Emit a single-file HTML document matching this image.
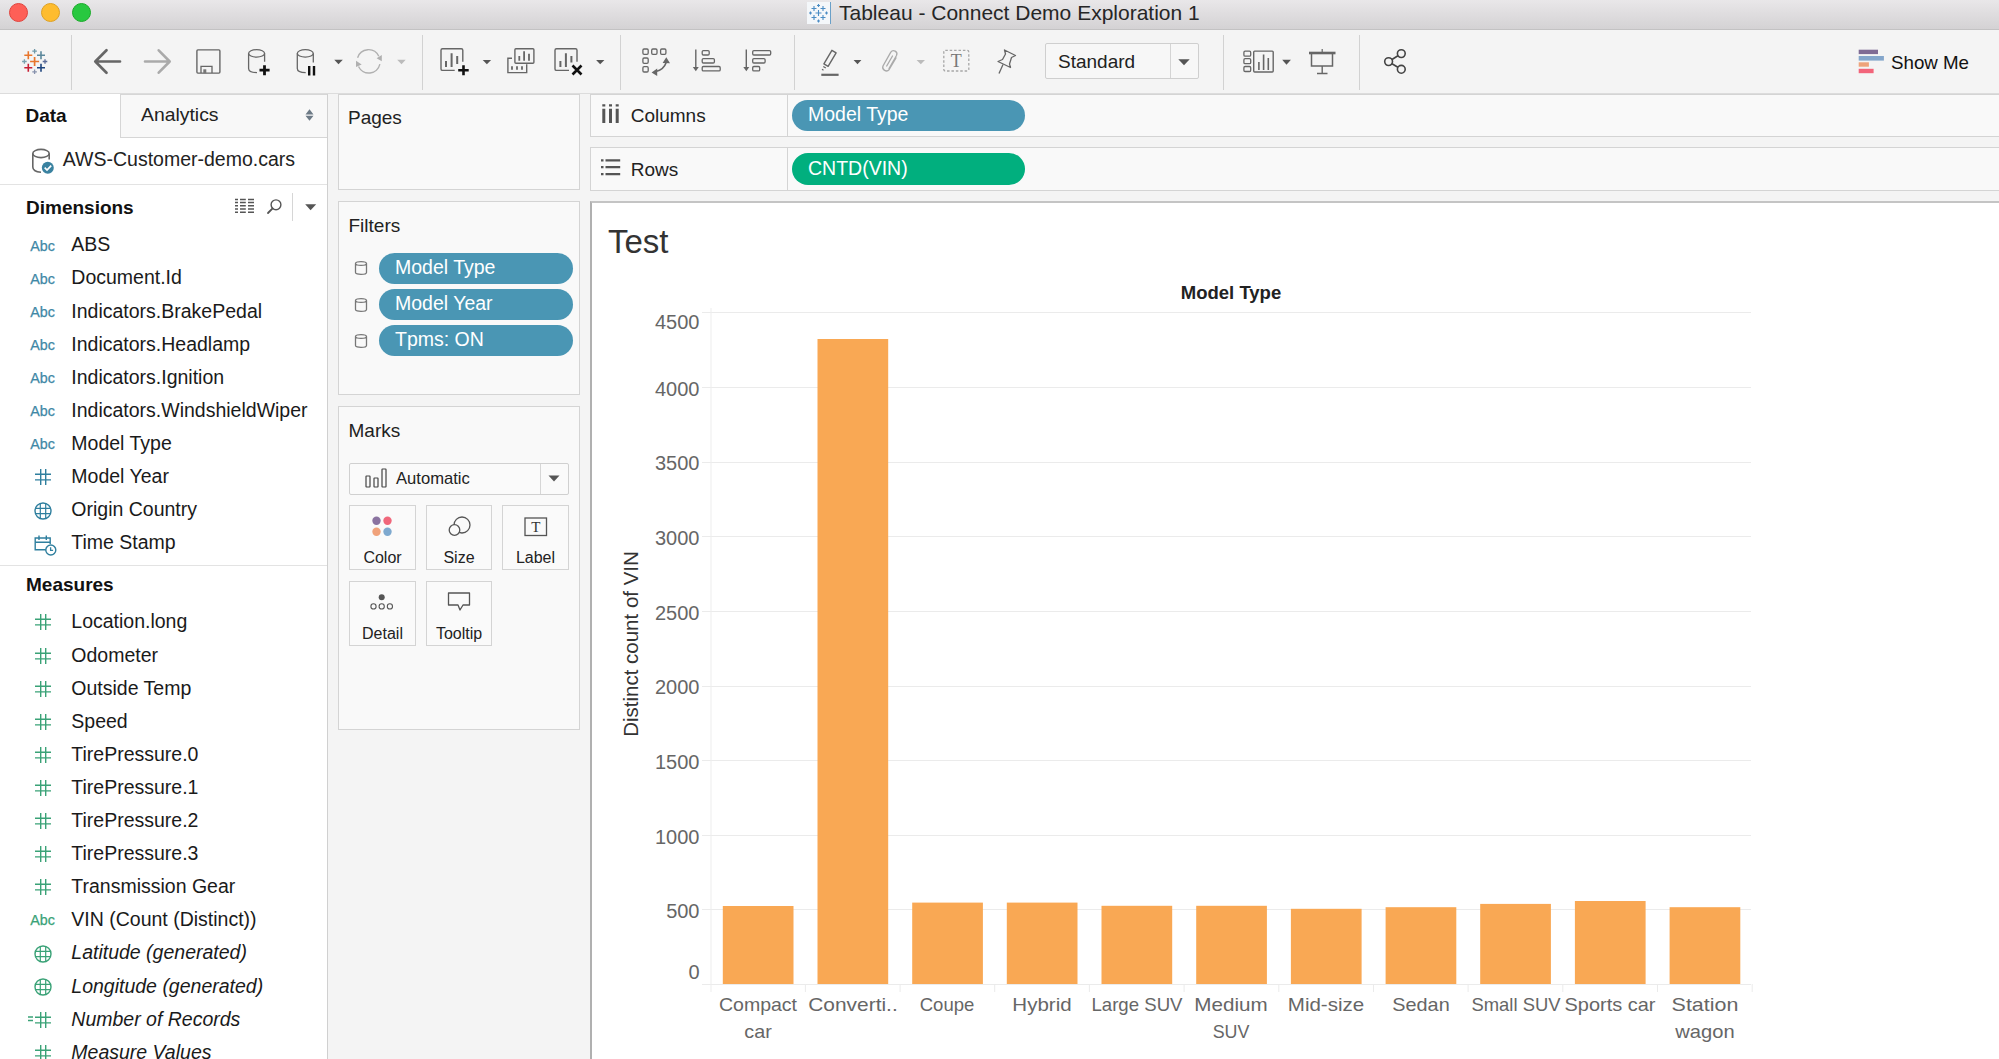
<!DOCTYPE html>
<html><head><meta charset="utf-8"><style>
html,body{margin:0;padding:0;width:1999px;height:1059px;overflow:hidden;background:#fff;font-family:"Liberation Sans", sans-serif;}
.r{position:absolute;}
.t{position:absolute;white-space:nowrap;line-height:1;}
.pill{border-radius:16px;}
</style></head><body>
<div class="r" style="left:0px;top:0px;width:1999px;height:29px;background:linear-gradient(#e9e7e9,#d4d2d4);"></div><div class="r" style="left:0px;top:29px;width:1999px;height:1px;background:#c3c2c3;"></div><div class="r" style="left:9.2px;top:2.7px;width:19px;height:19px;border-radius:50%;background:#fe5f57;box-sizing:border-box;border:0.5px solid #e0443e;"></div><div class="r" style="left:40.9px;top:2.7px;width:19px;height:19px;border-radius:50%;background:#febc2e;box-sizing:border-box;border:0.5px solid #dea123;"></div><div class="r" style="left:72.3px;top:2.7px;width:19px;height:19px;border-radius:50%;background:#28c840;box-sizing:border-box;border:0.5px solid #1aab29;"></div><div class="r" style="left:807px;top:2px;width:24px;height:22px;background:#f4f7fa;border-right:1px solid #6aa0c8;box-sizing:border-box;"></div><svg class="r" style="left:807px;top:2px;" width="24" height="22" viewBox="0 0 24 22"><path d="M10.0 3.5h3.0M11.5 2.0v3.0" stroke="#4a8cc4" stroke-width="1.1"/><path d="M4.5 6.5h5.0M7 4.0v5.0" stroke="#4a8cc4" stroke-width="1.1"/><path d="M13.5 6.5h5.0M16 4.0v5.0" stroke="#4a8cc4" stroke-width="1.1"/><path d="M2.0 11h3.0M3.5 9.5v3.0" stroke="#4a8cc4" stroke-width="1.1"/><path d="M8.5 11h6M11.5 8v6" stroke="#4a8cc4" stroke-width="1.1"/><path d="M18.0 11h3.0M19.5 9.5v3.0" stroke="#4a8cc4" stroke-width="1.1"/><path d="M4.5 15.5h5.0M7 13.0v5.0" stroke="#4a8cc4" stroke-width="1.1"/><path d="M13.5 15.5h5.0M16 13.0v5.0" stroke="#4a8cc4" stroke-width="1.1"/><path d="M10.0 19h3.0M11.5 17.5v3.0" stroke="#4a8cc4" stroke-width="1.1"/></svg><div class="t" style="left:839.0px;top:2.1px;font-size:21px;color:#262626;">Tableau - Connect Demo Exploration 1</div><div class="r" style="left:0px;top:30px;width:1999px;height:63px;background:#f4f4f4;"></div><div class="r" style="left:0px;top:93px;width:1999px;height:1px;background:#dcdcdc;"></div><div class="r" style="left:71px;top:35px;width:1px;height:55px;background:#d2d2d2;"></div><div class="r" style="left:422px;top:35px;width:1px;height:55px;background:#d2d2d2;"></div><div class="r" style="left:620px;top:35px;width:1px;height:55px;background:#d2d2d2;"></div><div class="r" style="left:794px;top:35px;width:1px;height:55px;background:#d2d2d2;"></div><div class="r" style="left:1223px;top:35px;width:1px;height:55px;background:#d2d2d2;"></div><div class="r" style="left:1359px;top:35px;width:1px;height:55px;background:#d2d2d2;"></div><svg class="r" style="left:0px;top:0px;pointer-events:none;" width="1999" height="100" viewBox="0 0 1999 100"><path d="M32.300000000000004 51.2h4.6M34.6 48.900000000000006v4.6" stroke="#6f98a8" stroke-width="1.3"/><path d="M24.3 55.2h8.0M28.3 51.2v8.0" stroke="#e8762c" stroke-width="1.6"/><path d="M37.0 55.2h8.0M41.0 51.2v8.0" stroke="#5b879b" stroke-width="1.6"/><path d="M30.1 61.5h9.0M34.6 57.0v9.0" stroke="#e8762c" stroke-width="1.7"/><path d="M22.099999999999998 61.5h4.6M24.4 59.2v4.6" stroke="#7aa2af" stroke-width="1.3"/><path d="M42.7 61.5h4.6M45.0 59.2v4.6" stroke="#5a6b99" stroke-width="1.3"/><path d="M24.3 67.8h8.0M28.3 63.8v8.0" stroke="#c72035" stroke-width="1.6"/><path d="M37.0 67.8h8.0M41.0 63.8v8.0" stroke="#1f457e" stroke-width="1.6"/><path d="M32.300000000000004 71.8h4.6M34.6 69.5v4.6" stroke="#8792ad" stroke-width="1.3"/><path d="M120 61.5H96M106.5 50.3L95.3 61.5L106.5 72.7" stroke="#666" stroke-width="2.7" fill="none" stroke-linecap="round" stroke-linejoin="round"/><path d="M145 61.5H169.5M158.7 50.3L169.7 61.5L158.7 72.7" stroke="#aaa" stroke-width="2.6" fill="none" stroke-linecap="round" stroke-linejoin="round"/><rect x="196.9" y="49.9" width="23" height="23.2" rx="1" stroke="#666" stroke-width="1.4" fill="none"/><path d="M201 73V66.3H212V73" stroke="#666" stroke-width="1.3" fill="none"/><rect x="203.3" y="69.3" width="3" height="4" fill="#777"/><ellipse cx="256.6" cy="53.4" rx="8" ry="3.7" stroke="#666" stroke-width="1.3" fill="none"/><path d="M248.6 53.4V68.5C248.6 71 252 72.6 257 72.6M264.6 53.4V61.8" stroke="#666" stroke-width="1.3" fill="none"/><path d="M259.5 70.2H269.6M264.5 65.2V75.3" stroke="#111" stroke-width="2.8"/><ellipse cx="305.3" cy="53.4" rx="8" ry="3.7" stroke="#666" stroke-width="1.3" fill="none"/><path d="M297.3 53.4V68.5C297.3 71 300.7 72.6 305.7 72.6M313.3 53.4V62.5" stroke="#666" stroke-width="1.3" fill="none"/><path d="M309.2 66V75.5M314 66V75.5" stroke="#111" stroke-width="2.4"/><path d="M334.3 59.8h8.5L338.5 64.3Z" fill="#555"/><path d="M397.2 59.8h8.5L401.5 64.3Z" fill="#bbb"/><path d="M357.6 57.7A11.4 11.4 0 0 1 378.8 56.2M379.9 64.2A11.4 11.4 0 0 1 358.5 66.5" stroke="#b0b0b0" stroke-width="1.4" fill="none"/><path d="M381.8 55L381.8 61.3L376.6 58.2Z M356 60.8L356 67L361.7 64.5Z" fill="#b0b0b0"/><path d="M462.8 61.7V50.3Q462.8 48.8 461.3 48.8H442.5Q441 48.8 441 50.3V68.9Q441 70.4 442.5 70.4H454.7" stroke="#666" stroke-width="1.4" fill="none"/><path d="M446 67V61M451.6 67V53.2M457.2 64V56" stroke="#666" stroke-width="2"/><path d="M458.2 70.2H468.7M463.5 65.2V75.3" stroke="#111" stroke-width="2.6"/><path d="M482.7 60h8.4L486.9 64.3Z" fill="#555"/><rect x="514.9" y="48.7" width="19" height="14.5" rx="1" stroke="#666" stroke-width="1.4" fill="#f4f4f4"/><path d="M519.3 60.8V56M524.1 60.8V51.2M529 60.8V53.8" stroke="#666" stroke-width="1.8"/><path d="M512 58.3H507.9V72.6H526.7V64.2" stroke="#666" stroke-width="1.4" fill="none"/><path d="M512 66.3V69.8M517 66.3V69.8M522 66.3V69.8" stroke="#666" stroke-width="1.8"/><path d="M577 61.7V50.3Q577 48.8 575.5 48.8H556.5Q555 48.8 555 50.3V68.9Q555 70.4 556.5 70.4H569" stroke="#666" stroke-width="1.4" fill="none"/><path d="M560.4 67V61M565.9 67V53.2M571.4 62.6V56" stroke="#666" stroke-width="2"/><path d="M572.5 65.5L581.5 74.5M581.5 65.5L572.5 74.5" stroke="#111" stroke-width="2.6"/><path d="M596.1 60h8.3L600.2 64.3Z" fill="#555"/><rect x="642.9" y="49" width="5.3" height="5.3" rx="1.2" stroke="#666" stroke-width="1.3" fill="none"/><rect x="651.7" y="49" width="5.3" height="5.3" rx="1.2" stroke="#666" stroke-width="1.3" fill="none"/><rect x="660.6" y="49" width="5.3" height="5.3" rx="1.2" stroke="#666" stroke-width="1.3" fill="none"/><rect x="642.9" y="58" width="5.3" height="5.3" rx="1.2" stroke="#666" stroke-width="1.3" fill="none"/><rect x="642.9" y="66.7" width="5.3" height="5.3" rx="1.2" stroke="#666" stroke-width="1.3" fill="none"/><path d="M656 71.6Q663.8 69.5 666.2 62.5" stroke="#666" stroke-width="1.6" fill="none"/><path d="M666.3 57.3L670 63.2L662.6 63Z M651.6 72.4L657.2 68.5L657.2 76Z" fill="#666"/><path d="M695.8 49.6V68" stroke="#666" stroke-width="1.4"/><path d="M692.8 67h6L695.8 71.3Z" fill="#666"/><rect x="702.2" y="50.6" width="7" height="4.4" rx="1.2" stroke="#666" stroke-width="1.3" fill="none"/><rect x="702.2" y="58.6" width="12.2" height="4.4" rx="1.2" stroke="#666" stroke-width="1.3" fill="none"/><rect x="702.2" y="66.5" width="18" height="4.4" rx="1.2" stroke="#666" stroke-width="1.3" fill="none"/><path d="M746.3 49.6V68" stroke="#666" stroke-width="1.4"/><path d="M743.3 67h6L746.3 71.3Z" fill="#666"/><rect x="752.7" y="50.6" width="18" height="4.4" rx="1.2" stroke="#666" stroke-width="1.3" fill="none"/><rect x="752.7" y="58.6" width="12.4" height="4.4" rx="1.2" stroke="#666" stroke-width="1.3" fill="none"/><rect x="752.7" y="66.5" width="7" height="4.4" rx="1.2" stroke="#666" stroke-width="1.3" fill="none"/><path d="M821.3 74.8H838.6" stroke="#666" stroke-width="2.2"/><path d="M831.9 50.3L836.1 52.8L828.1 66.3L823.9 63.8Z" stroke="#666" stroke-width="1.4" fill="none" stroke-linejoin="round"/><path d="M823.3 66.5L825.8 68M822 69.3L823.5 70.2" stroke="#666" stroke-width="1.3"/><path d="M853.6 60h7.8L857.5 64.3Z" fill="#555"/><path d="M889 68.5L896.5 55.5A3.3 3.3 0 0 0 890.8 52.2L883 66A3.6 3.6 0 0 0 889.2 69.5L896 57.8M892.5 56L886.7 66" stroke="#aaa" stroke-width="1.3" fill="none" stroke-linecap="round"/><path d="M916.6 60h8.4L920.8 64.3Z" fill="#bbb"/><rect x="943.8" y="50.4" width="25" height="20.6" rx="1.5" stroke="#a6a6a6" stroke-width="1.3" stroke-dasharray="2.5 1.9" fill="none"/><text x="956.3" y="67.3" font-family="Liberation Serif" font-size="18" text-anchor="middle" fill="#777">T</text><path d="M1004.5 50L1015.5 55.5L1011.5 57.5L1009.5 64L1010.5 67.5L998 61.5L1002.5 59.5L1005.5 54Z" stroke="#666" stroke-width="1.3" fill="none" stroke-linejoin="round"/><path d="M1003 64.5L999 73.5" stroke="#666" stroke-width="1.3"/><rect x="1243.9" y="51.2" width="6.8" height="5" rx="1.2" stroke="#666" stroke-width="1.3" fill="none"/><rect x="1243.9" y="58.7" width="6.8" height="5" rx="1.2" stroke="#666" stroke-width="1.3" fill="none"/><rect x="1243.9" y="66.5" width="6.8" height="5" rx="1.2" stroke="#666" stroke-width="1.3" fill="none"/><rect x="1253.7" y="51.1" width="19.5" height="20.9" rx="1" stroke="#666" stroke-width="1.4" fill="none"/><path d="M1258.9 70V62M1263.6 70V54.5M1268.3 70V58" stroke="#666" stroke-width="1.6"/><path d="M1282.2 59.7h8.7L1286.5 64.7Z" fill="#555"/><path d="M1309 53h26.5" stroke="#666" stroke-width="2.6"/><path d="M1322.2 49v3" stroke="#666" stroke-width="1.2"/><path d="M1311.5 54V66H1332.5V54" stroke="#666" stroke-width="1.5" fill="none"/><path d="M1322.2 66V73.5M1317 73.5H1327.5" stroke="#666" stroke-width="1.4"/><circle cx="1401.3" cy="53.6" r="3.9" stroke="#444" stroke-width="1.6" fill="none"/><circle cx="1388.6" cy="61.6" r="3.9" stroke="#444" stroke-width="1.6" fill="none"/><circle cx="1401.3" cy="69.3" r="3.9" stroke="#444" stroke-width="1.6" fill="none"/><path d="M1392 59.5L1397.9 55.8M1392 63.8L1397.9 67.2" stroke="#444" stroke-width="1.6"/><rect x="1858.7" y="49.7" width="19.3" height="4.4" fill="#7f6b94"/><rect x="1858.7" y="56" width="25.2" height="4.6" fill="#84a6cb"/><rect x="1858.7" y="62.3" width="10.2" height="4.4" fill="#eea37a"/><rect x="1858.7" y="68.8" width="14.9" height="4.4" fill="#f2647a"/></svg><div class="r" style="left:1044.7px;top:43px;width:154px;height:35.5px;background:#f7f7f7;border:1px solid #cfcfcf;border-radius:2px;box-sizing:border-box;"></div><div class="r" style="left:1169.5px;top:44px;width:1px;height:33.5px;background:#d4d4d4;"></div><svg class="r" style="left:1177.8px;top:58.5px;" width="12" height="7" viewBox="0 0 12 7"><path d="M0.3 0.3h11.4L6 6.3Z" fill="#555"/></svg><div class="t" style="left:1058.0px;top:51.5px;font-size:19px;color:#222;">Standard</div><div class="t" style="left:1891.3px;top:53.1px;font-size:19px;color:#111;transform: scaleX(0.985);transform-origin:left center;">Show Me</div><div class="r" style="left:0px;top:94px;width:327px;height:965px;background:#ffffff;"></div><div class="r" style="left:327px;top:94px;width:1px;height:965px;background:#d0d0d0;"></div><div class="r" style="left:328px;top:94px;width:1671px;height:965px;background:#f4f4f4;"></div><div class="r" style="left:120px;top:94px;width:207px;height:44px;background:#f8f8f8;border-left:1px solid #d6d6d6;border-bottom:1px solid #d6d6d6;border-top:1px solid #d6d6d6;box-sizing:border-box;"></div><div class="t" style="left:25.5px;top:105.9px;font-size:19px;color:#111;font-weight:700;">Data</div><div class="t" style="left:141.0px;top:105.4px;font-size:19px;color:#222;transform: scaleX(1.02);transform-origin:left center;">Analytics</div><svg class="r" style="left:305px;top:108.5px;" width="10" height="13" viewBox="0 0 10 13"><path d="M0.5 5.5L4.5 0.3L8.5 5.5Z M0.5 6.8L4.5 11.8L8.5 6.8Z" fill="#6d7a86"/></svg><div class="t" style="left:62.8px;top:150.3px;font-size:19.5px;color:#222;">AWS-Customer-demo.cars</div><div class="r" style="left:0px;top:184px;width:327px;height:1px;background:#e3e3e3;"></div><div class="t" style="left:26.0px;top:198.2px;font-size:19px;color:#111;font-weight:700;">Dimensions</div><div class="t" style="left:26.0px;top:575.0px;font-size:19px;color:#111;font-weight:700;">Measures</div><div class="r" style="left:0px;top:565px;width:327px;height:1px;background:#e3e3e3;"></div><div class="t" style="left:71.3px;top:235.3px;font-size:19.5px;color:#1a1a1a;">ABS</div><div class="t" style="left:71.3px;top:268.4px;font-size:19.5px;color:#1a1a1a;">Document.Id</div><div class="t" style="left:71.3px;top:301.5px;font-size:19.5px;color:#1a1a1a;">Indicators.BrakePedal</div><div class="t" style="left:71.3px;top:334.6px;font-size:19.5px;color:#1a1a1a;">Indicators.Headlamp</div><div class="t" style="left:71.3px;top:367.7px;font-size:19.5px;color:#1a1a1a;">Indicators.Ignition</div><div class="t" style="left:71.3px;top:400.8px;font-size:19.5px;color:#1a1a1a;">Indicators.WindshieldWiper</div><div class="t" style="left:71.3px;top:433.9px;font-size:19.5px;color:#1a1a1a;">Model Type</div><div class="t" style="left:71.3px;top:467.0px;font-size:19.5px;color:#1a1a1a;">Model Year</div><div class="t" style="left:71.3px;top:500.1px;font-size:19.5px;color:#1a1a1a;">Origin Country</div><div class="t" style="left:71.3px;top:533.2px;font-size:19.5px;color:#1a1a1a;">Time Stamp</div><div class="t" style="left:71.3px;top:612.4px;font-size:19.5px;color:#1a1a1a;">Location.long</div><div class="t" style="left:71.3px;top:645.5px;font-size:19.5px;color:#1a1a1a;">Odometer</div><div class="t" style="left:71.3px;top:678.6px;font-size:19.5px;color:#1a1a1a;">Outside Temp</div><div class="t" style="left:71.3px;top:711.7px;font-size:19.5px;color:#1a1a1a;">Speed</div><div class="t" style="left:71.3px;top:744.8px;font-size:19.5px;color:#1a1a1a;">TirePressure.0</div><div class="t" style="left:71.3px;top:777.9px;font-size:19.5px;color:#1a1a1a;">TirePressure.1</div><div class="t" style="left:71.3px;top:811.0px;font-size:19.5px;color:#1a1a1a;">TirePressure.2</div><div class="t" style="left:71.3px;top:844.1px;font-size:19.5px;color:#1a1a1a;">TirePressure.3</div><div class="t" style="left:71.3px;top:877.2px;font-size:19.5px;color:#1a1a1a;">Transmission Gear</div><div class="t" style="left:71.3px;top:910.3px;font-size:19.5px;color:#1a1a1a;">VIN (Count (Distinct))</div><div class="t" style="left:71.3px;top:943.4px;font-size:19.5px;color:#1a1a1a;font-style:italic;">Latitude (generated)</div><div class="t" style="left:71.3px;top:976.5px;font-size:19.5px;color:#1a1a1a;font-style:italic;">Longitude (generated)</div><div class="t" style="left:71.3px;top:1009.6px;font-size:19.5px;color:#1a1a1a;font-style:italic;">Number of Records</div><div class="t" style="left:71.3px;top:1042.7px;font-size:19.5px;color:#1a1a1a;font-style:italic;">Measure Values</div><div class="r" style="left:338px;top:94px;width:242px;height:96px;background:#f9f9f9;border:1px solid #d4d4d4;box-sizing:border-box;"></div><div class="r" style="left:338px;top:201px;width:242px;height:194px;background:#f9f9f9;border:1px solid #d4d4d4;box-sizing:border-box;"></div><div class="r" style="left:338px;top:406px;width:242px;height:324px;background:#f9f9f9;border:1px solid #d4d4d4;box-sizing:border-box;"></div><div class="t" style="left:348.0px;top:108.2px;font-size:19px;color:#222;">Pages</div><div class="t" style="left:348.5px;top:215.9px;font-size:19px;color:#222;">Filters</div><div class="t" style="left:348.5px;top:420.9px;font-size:19px;color:#222;">Marks</div><div class="r" style="left:590px;top:94px;width:1409px;height:43px;background:#f9f9f9;border:1px solid #d4d4d4;border-right:none;box-sizing:border-box;"></div><div class="r" style="left:590px;top:147px;width:1409px;height:44px;background:#f9f9f9;border:1px solid #d4d4d4;border-right:none;box-sizing:border-box;"></div><div class="r" style="left:787px;top:94px;width:1px;height:43px;background:#d4d4d4;"></div><div class="r" style="left:787px;top:147px;width:1px;height:44px;background:#d4d4d4;"></div><div class="t" style="left:630.7px;top:106.3px;font-size:19px;color:#222;">Columns</div><div class="t" style="left:630.7px;top:160.3px;font-size:19px;color:#222;">Rows</div><div class="r pill" style="left:792px;top:99.5px;width:233px;height:31px;background:#4a96b4;"></div><div class="r pill" style="left:792px;top:153.3px;width:233px;height:31.3px;background:#01af7e;"></div><div class="t" style="left:808.0px;top:105.1px;font-size:19.5px;color:#fff;">Model Type</div><div class="t" style="left:808.0px;top:158.5px;font-size:19.5px;color:#fff;">CNTD(VIN)</div><div class="r" style="left:590px;top:201px;width:1409px;height:858px;background:#ffffff;border-left:2px solid #b0b0b0;border-top:2px solid #c4c4c4;box-sizing:border-box;"></div><div class="t" style="left:30.2px;top:238.7px;font-size:14.3px;color:#3f88a6;-webkit-text-stroke:0.25px #3f88a6;">Abc</div><div class="t" style="left:30.2px;top:271.8px;font-size:14.3px;color:#3f88a6;-webkit-text-stroke:0.25px #3f88a6;">Abc</div><div class="t" style="left:30.2px;top:304.9px;font-size:14.3px;color:#3f88a6;-webkit-text-stroke:0.25px #3f88a6;">Abc</div><div class="t" style="left:30.2px;top:338.0px;font-size:14.3px;color:#3f88a6;-webkit-text-stroke:0.25px #3f88a6;">Abc</div><div class="t" style="left:30.2px;top:371.1px;font-size:14.3px;color:#3f88a6;-webkit-text-stroke:0.25px #3f88a6;">Abc</div><div class="t" style="left:30.2px;top:404.2px;font-size:14.3px;color:#3f88a6;-webkit-text-stroke:0.25px #3f88a6;">Abc</div><div class="t" style="left:30.2px;top:437.3px;font-size:14.3px;color:#3f88a6;-webkit-text-stroke:0.25px #3f88a6;">Abc</div><svg class="r" style="left:34.5px;top:469.3px;" width="16" height="16" viewBox="0 0 16 16"><path d="M5.7 0v16M10.7 0v16M0 5.3h16M0 10.9h16" stroke="#2f7f9e" stroke-width="1.4" fill="none"/></svg><svg class="r" style="left:33.6px;top:501.8px;" width="18" height="18" viewBox="0 0 18 18"><circle cx="9" cy="9" r="8" stroke="#2f7f9e" stroke-width="1.4" fill="none"/><path d="M6.3 1.5v15M11.7 1.5v15M1.5 6.3h15M1.5 11.7h15" stroke="#2f7f9e" stroke-width="1.2" fill="none"/></svg><svg class="r" style="left:34px;top:534.7px;" width="23" height="21" viewBox="0 0 23 21"><path d="M14 14.8H1.2V3H16.2V9" stroke="#2f7f9e" stroke-width="1.4" fill="none"/><path d="M1.2 7.2H16.2M5 0.5v4.5M12.3 0.5v4.5" stroke="#2f7f9e" stroke-width="1.4" fill="none"/><circle cx="16.8" cy="15" r="5" stroke="#2f7f9e" stroke-width="1.4" fill="#fff"/><path d="M16.6 12.3v3h2.5" stroke="#2f7f9e" stroke-width="1.3" fill="none"/></svg><svg class="r" style="left:34.7px;top:614.4px;" width="16" height="16" viewBox="0 0 16 16"><path d="M5.7 0v16M10.7 0v16M0 5.3h16M0 10.9h16" stroke="#3aa277" stroke-width="1.4" fill="none"/></svg><svg class="r" style="left:34.7px;top:647.5px;" width="16" height="16" viewBox="0 0 16 16"><path d="M5.7 0v16M10.7 0v16M0 5.3h16M0 10.9h16" stroke="#3aa277" stroke-width="1.4" fill="none"/></svg><svg class="r" style="left:34.7px;top:680.6px;" width="16" height="16" viewBox="0 0 16 16"><path d="M5.7 0v16M10.7 0v16M0 5.3h16M0 10.9h16" stroke="#3aa277" stroke-width="1.4" fill="none"/></svg><svg class="r" style="left:34.7px;top:713.7px;" width="16" height="16" viewBox="0 0 16 16"><path d="M5.7 0v16M10.7 0v16M0 5.3h16M0 10.9h16" stroke="#3aa277" stroke-width="1.4" fill="none"/></svg><svg class="r" style="left:34.7px;top:746.8px;" width="16" height="16" viewBox="0 0 16 16"><path d="M5.7 0v16M10.7 0v16M0 5.3h16M0 10.9h16" stroke="#3aa277" stroke-width="1.4" fill="none"/></svg><svg class="r" style="left:34.7px;top:779.9px;" width="16" height="16" viewBox="0 0 16 16"><path d="M5.7 0v16M10.7 0v16M0 5.3h16M0 10.9h16" stroke="#3aa277" stroke-width="1.4" fill="none"/></svg><svg class="r" style="left:34.7px;top:813.0px;" width="16" height="16" viewBox="0 0 16 16"><path d="M5.7 0v16M10.7 0v16M0 5.3h16M0 10.9h16" stroke="#3aa277" stroke-width="1.4" fill="none"/></svg><svg class="r" style="left:34.7px;top:846.1px;" width="16" height="16" viewBox="0 0 16 16"><path d="M5.7 0v16M10.7 0v16M0 5.3h16M0 10.9h16" stroke="#3aa277" stroke-width="1.4" fill="none"/></svg><svg class="r" style="left:34.7px;top:879.2px;" width="16" height="16" viewBox="0 0 16 16"><path d="M5.7 0v16M10.7 0v16M0 5.3h16M0 10.9h16" stroke="#3aa277" stroke-width="1.4" fill="none"/></svg><div class="t" style="left:30.2px;top:913.4px;font-size:14.3px;color:#3aa277;-webkit-text-stroke:0.25px #3aa277;">Abc</div><svg class="r" style="left:33.6px;top:944.8000000000001px;" width="18" height="18" viewBox="0 0 18 18"><circle cx="9" cy="9" r="8" stroke="#3aa277" stroke-width="1.4" fill="none"/><path d="M6.3 1.5v15M11.7 1.5v15M1.5 6.3h15M1.5 11.7h15" stroke="#3aa277" stroke-width="1.2" fill="none"/></svg><svg class="r" style="left:33.6px;top:977.9000000000001px;" width="18" height="18" viewBox="0 0 18 18"><circle cx="9" cy="9" r="8" stroke="#3aa277" stroke-width="1.4" fill="none"/><path d="M6.3 1.5v15M11.7 1.5v15M1.5 6.3h15M1.5 11.7h15" stroke="#3aa277" stroke-width="1.2" fill="none"/></svg><svg class="r" style="left:34.7px;top:1011.6000000000001px;" width="16" height="16" viewBox="0 0 16 16"><path d="M5.7 0v16M10.7 0v16M0 5.3h16M0 10.9h16" stroke="#3aa277" stroke-width="1.4" fill="none"/></svg><svg class="r" style="left:28px;top:1016.3000000000002px;" width="5" height="6" viewBox="0 0 5 6"><path d="M0 1h5M0 4.5h5" stroke="#3aa277" stroke-width="1.4"/></svg><svg class="r" style="left:34.7px;top:1044.7px;" width="16" height="16" viewBox="0 0 16 16"><path d="M5.7 0v16M10.7 0v16M0 5.3h16M0 10.9h16" stroke="#3aa277" stroke-width="1.4" fill="none"/></svg><svg class="r" style="left:30px;top:146px;" width="28" height="28" viewBox="0 0 28 28"><ellipse cx="11" cy="7.5" rx="8.2" ry="4.1" stroke="#666" stroke-width="1.6" fill="none"/><path d="M2.8 7.5V21C2.8 24.5 7 26 11 26.3M19.2 7.5V13.6" stroke="#666" stroke-width="1.6" fill="none"/><circle cx="17.8" cy="21.8" r="6" fill="#3a82a0"/><path d="M14.7 21.7l2.3 2.3l4.2-4.4" stroke="#fff" stroke-width="1.7" fill="none"/></svg><svg class="r" style="left:234px;top:197px;" width="22" height="18" viewBox="0 0 22 18"><path d="M1 2.4h3M6 2.4h5.8M14 2.4h6" stroke="#555" stroke-width="1.5"/><path d="M1 5.5h3M6 5.5h5.8M14 5.5h6" stroke="#555" stroke-width="1.5"/><path d="M1 8.8h3M6 8.8h5.8M14 8.8h6" stroke="#555" stroke-width="1.5"/><path d="M1 12.1h3M6 12.1h5.8M14 12.1h6" stroke="#555" stroke-width="1.5"/><path d="M1 15.3h3M6 15.3h5.8M14 15.3h6" stroke="#555" stroke-width="1.5"/></svg><svg class="r" style="left:264px;top:197px;" width="20" height="20" viewBox="0 0 20 20"><circle cx="12" cy="7.8" r="4.9" stroke="#555" stroke-width="1.4" fill="none"/><path d="M8.6 11.3L4 16" stroke="#555" stroke-width="1.8" stroke-linecap="round"/></svg><div class="r" style="left:291.5px;top:193px;width:1px;height:28px;background:#d6d6d6;"></div><svg class="r" style="left:305px;top:203.5px;" width="12" height="7" viewBox="0 0 12 7"><path d="M0.2 0.3h11L5.6 6.2Z" fill="#555"/></svg><div class="r pill" style="left:379px;top:252.7px;width:194px;height:31px;background:#4a96b4;"></div><div class="t" style="left:395.0px;top:257.8px;font-size:19.5px;color:#fff;">Model Type</div><svg class="r" style="left:354px;top:260.2px;" width="14" height="16" viewBox="0 0 14 16"><path d="M1.5 3.5C1.5 1 12.5 1 12.5 3.5V12.5C12.5 15 1.5 15 1.5 12.5Z M1.5 3.5C1.5 6 12.5 6 12.5 3.5" stroke="#777" stroke-width="1.3" fill="none"/></svg><div class="r pill" style="left:379px;top:289.0px;width:194px;height:31px;background:#4a96b4;"></div><div class="t" style="left:395.0px;top:294.1px;font-size:19.5px;color:#fff;">Model Year</div><svg class="r" style="left:354px;top:296.5px;" width="14" height="16" viewBox="0 0 14 16"><path d="M1.5 3.5C1.5 1 12.5 1 12.5 3.5V12.5C12.5 15 1.5 15 1.5 12.5Z M1.5 3.5C1.5 6 12.5 6 12.5 3.5" stroke="#777" stroke-width="1.3" fill="none"/></svg><div class="r pill" style="left:379px;top:325.3px;width:194px;height:31px;background:#4a96b4;"></div><div class="t" style="left:395.0px;top:330.4px;font-size:19.5px;color:#fff;">Tpms: ON</div><svg class="r" style="left:354px;top:332.79999999999995px;" width="14" height="16" viewBox="0 0 14 16"><path d="M1.5 3.5C1.5 1 12.5 1 12.5 3.5V12.5C12.5 15 1.5 15 1.5 12.5Z M1.5 3.5C1.5 6 12.5 6 12.5 3.5" stroke="#777" stroke-width="1.3" fill="none"/></svg><div class="r" style="left:349px;top:463px;width:220px;height:32px;background:#fafafa;border:1px solid #d0d0d0;border-radius:2px;box-sizing:border-box;"></div><div class="r" style="left:540px;top:464px;width:1px;height:30px;background:#d6d6d6;"></div><svg class="r" style="left:548px;top:475px;" width="12" height="7" viewBox="0 0 12 7"><path d="M0.5 0.5h11L6 6.5Z" fill="#555"/></svg><svg class="r" style="left:365px;top:468px;" width="23" height="20" viewBox="0 0 23 20"><rect x="1" y="8" width="4" height="11" stroke="#444" stroke-width="1.2" fill="none" rx="0.5"/><rect x="9" y="10" width="4" height="9" stroke="#444" stroke-width="1.2" fill="none" rx="0.5"/><rect x="17" y="1" width="4" height="18" stroke="#444" stroke-width="1.2" fill="none" rx="0.5"/></svg><div class="t" style="left:396.0px;top:471.4px;font-size:16.6px;color:#222;">Automatic</div><div class="r" style="left:349px;top:505px;width:67px;height:65px;background:#fafafa;border:1px solid #d4d4d4;box-sizing:border-box;"></div><div class="t" style="left:382.5px;top:550.0px;font-size:16px;color:#222;transform:translateX(-50%);transform-origin:center center;">Color</div><svg class="r" style="left:367.5px;top:513px;" width="30" height="28" viewBox="0 0 30 28"><circle cx="8.5" cy="7.8" r="4.2" fill="#8a73a0"/><circle cx="19.5" cy="7.8" r="4.2" fill="#f0677b"/><circle cx="8.5" cy="18.8" r="4.2" fill="#f0a27a"/><circle cx="19.5" cy="18.8" r="4.2" fill="#7ea9cf"/></svg><div class="r" style="left:426px;top:505px;width:66px;height:65px;background:#fafafa;border:1px solid #d4d4d4;box-sizing:border-box;"></div><div class="t" style="left:459.0px;top:550.0px;font-size:16px;color:#222;transform:translateX(-50%);transform-origin:center center;">Size</div><svg class="r" style="left:444.0px;top:513px;" width="30" height="28" viewBox="0 0 30 28"><circle cx="18" cy="12" r="8" stroke="#555" stroke-width="1.3" fill="none"/><circle cx="10.5" cy="17" r="5.3" stroke="#555" stroke-width="1.3" fill="#fafafa"/></svg><div class="r" style="left:502px;top:505px;width:67px;height:65px;background:#fafafa;border:1px solid #d4d4d4;box-sizing:border-box;"></div><div class="t" style="left:535.5px;top:550.0px;font-size:16px;color:#222;transform:translateX(-50%);transform-origin:center center;">Label</div><svg class="r" style="left:520.5px;top:513px;" width="30" height="28" viewBox="0 0 30 28"><rect x="4" y="5" width="21.5" height="17.5" stroke="#555" stroke-width="1.3" fill="none"/><text x="14.75" y="19.3" font-family="Liberation Serif" font-size="15" text-anchor="middle" fill="#333">T</text></svg><div class="r" style="left:349px;top:581px;width:67px;height:65px;background:#fafafa;border:1px solid #d4d4d4;box-sizing:border-box;"></div><div class="t" style="left:382.5px;top:626.0px;font-size:16px;color:#222;transform:translateX(-50%);transform-origin:center center;">Detail</div><svg class="r" style="left:367.5px;top:589px;" width="30" height="28" viewBox="0 0 30 28"><circle cx="13.7" cy="8.3" r="3" fill="#555"/><circle cx="5.5" cy="17.4" r="2.6" stroke="#555" stroke-width="1.1" fill="none"/><circle cx="13.7" cy="17.4" r="2.6" stroke="#555" stroke-width="1.1" fill="none"/><circle cx="21.9" cy="17.4" r="2.6" stroke="#555" stroke-width="1.1" fill="none"/></svg><div class="r" style="left:426px;top:581px;width:66px;height:65px;background:#fafafa;border:1px solid #d4d4d4;box-sizing:border-box;"></div><div class="t" style="left:459.0px;top:626.0px;font-size:16px;color:#222;transform:translateX(-50%);transform-origin:center center;">Tooltip</div><svg class="r" style="left:444.0px;top:589px;" width="30" height="28" viewBox="0 0 30 28"><path d="M4.5 4H25.5V16H19L16 21L14 16H4.5Z" stroke="#555" stroke-width="1.3" fill="none" stroke-linejoin="round"/></svg><svg class="r" style="left:601px;top:103px;" width="20" height="21" viewBox="0 0 20 21"><path d="M2.8 5.8V20M9.5 5.8V20M16.2 5.8V20M2.8 1.2V3.4M9.5 1.2V3.4M16.2 1.2V3.4" stroke="#555" stroke-width="3"/></svg><svg class="r" style="left:600px;top:158px;" width="22" height="19" viewBox="0 0 22 19"><path d="M1 2.3h2.5M1 9.2h2.5M1 16.2h2.5M5.5 2.3h14.7M5.5 9.2h14.7M5.5 16.2h14.7" stroke="#555" stroke-width="2.3"/></svg><div class="t" style="left:608.0px;top:225.0px;font-size:33px;color:#333;">Test</div><div class="t" style="left:1231.0px;top:284.1px;font-size:18.5px;color:#222;font-weight:700;transform:translateX(-50%);transform-origin:center center;">Model Type</div><svg class="r" style="left:0px;top:0px;pointer-events:none;" width="1999" height="1059" viewBox="0 0 1999 1059"><line x1="702" y1="984.5" x2="1751" y2="984.5" stroke="#ebebeb" stroke-width="1"/><line x1="702" y1="909.5" x2="1751" y2="909.5" stroke="#ebebeb" stroke-width="1"/><line x1="702" y1="835.5" x2="1751" y2="835.5" stroke="#ebebeb" stroke-width="1"/><line x1="702" y1="760.5" x2="1751" y2="760.5" stroke="#ebebeb" stroke-width="1"/><line x1="702" y1="686.5" x2="1751" y2="686.5" stroke="#ebebeb" stroke-width="1"/><line x1="702" y1="611.5" x2="1751" y2="611.5" stroke="#ebebeb" stroke-width="1"/><line x1="702" y1="536.5" x2="1751" y2="536.5" stroke="#ebebeb" stroke-width="1"/><line x1="702" y1="462.5" x2="1751" y2="462.5" stroke="#ebebeb" stroke-width="1"/><line x1="702" y1="387.5" x2="1751" y2="387.5" stroke="#ebebeb" stroke-width="1"/><line x1="702" y1="312.5" x2="1751" y2="312.5" stroke="#ebebeb" stroke-width="1"/><line x1="711" y1="308" x2="711" y2="992" stroke="#ededed" stroke-width="1"/><line x1="805.4" y1="984" x2="805.4" y2="992" stroke="#ebebeb" stroke-width="1"/><line x1="900.1" y1="984" x2="900.1" y2="992" stroke="#ebebeb" stroke-width="1"/><line x1="994.7" y1="984" x2="994.7" y2="992" stroke="#ebebeb" stroke-width="1"/><line x1="1089.4" y1="984" x2="1089.4" y2="992" stroke="#ebebeb" stroke-width="1"/><line x1="1184.1" y1="984" x2="1184.1" y2="992" stroke="#ebebeb" stroke-width="1"/><line x1="1278.8" y1="984" x2="1278.8" y2="992" stroke="#ebebeb" stroke-width="1"/><line x1="1373.5" y1="984" x2="1373.5" y2="992" stroke="#ebebeb" stroke-width="1"/><line x1="1468.1" y1="984" x2="1468.1" y2="992" stroke="#ebebeb" stroke-width="1"/><line x1="1562.8" y1="984" x2="1562.8" y2="992" stroke="#ebebeb" stroke-width="1"/><line x1="1657.5" y1="984" x2="1657.5" y2="992" stroke="#ebebeb" stroke-width="1"/><line x1="1752.2" y1="984" x2="1752.2" y2="992" stroke="#ebebeb" stroke-width="1"/><rect x="722.8" y="906" width="70.7" height="78.0" fill="#f9a854"/><rect x="817.5" y="339" width="70.7" height="645.0" fill="#f9a854"/><rect x="912.2" y="902.6" width="70.7" height="81.4" fill="#f9a854"/><rect x="1006.8" y="902.6" width="70.7" height="81.4" fill="#f9a854"/><rect x="1101.5" y="905.8" width="70.7" height="78.2" fill="#f9a854"/><rect x="1196.2" y="905.8" width="70.7" height="78.2" fill="#f9a854"/><rect x="1290.9" y="908.8" width="70.7" height="75.2" fill="#f9a854"/><rect x="1385.6" y="907.2" width="70.7" height="76.8" fill="#f9a854"/><rect x="1480.2" y="903.9" width="70.7" height="80.1" fill="#f9a854"/><rect x="1574.9" y="901" width="70.7" height="83.0" fill="#f9a854"/><rect x="1669.6" y="907.2" width="70.7" height="76.8" fill="#f9a854"/></svg><div class="t" style="left:699.5px;top:961.5px;font-size:20px;color:#666;transform:translateX(-100%);transform-origin:right center;">0</div><div class="t" style="left:699.5px;top:901.1px;font-size:20px;color:#666;transform:translateX(-100%);transform-origin:right center;">500</div><div class="t" style="left:699.5px;top:826.5px;font-size:20px;color:#666;transform:translateX(-100%);transform-origin:right center;">1000</div><div class="t" style="left:699.5px;top:751.9px;font-size:20px;color:#666;transform:translateX(-100%);transform-origin:right center;">1500</div><div class="t" style="left:699.5px;top:677.3px;font-size:20px;color:#666;transform:translateX(-100%);transform-origin:right center;">2000</div><div class="t" style="left:699.5px;top:602.7px;font-size:20px;color:#666;transform:translateX(-100%);transform-origin:right center;">2500</div><div class="t" style="left:699.5px;top:528.0px;font-size:20px;color:#666;transform:translateX(-100%);transform-origin:right center;">3000</div><div class="t" style="left:699.5px;top:453.4px;font-size:20px;color:#666;transform:translateX(-100%);transform-origin:right center;">3500</div><div class="t" style="left:699.5px;top:378.8px;font-size:20px;color:#666;transform:translateX(-100%);transform-origin:right center;">4000</div><div class="t" style="left:699.5px;top:311.7px;font-size:20px;color:#666;transform:translateX(-100%);transform-origin:right center;">4500</div><div class="t" style="left:631px;top:644px;font-size:20.5px;color:#333;transform:translate(-50%,-50%) rotate(-90deg);">Distinct count of VIN</div><div class="t" style="left:758.0px;top:995.4px;font-size:19px;color:#666;transform:translateX(-50%) scaleX(1.027);transform-origin:center center;">Compact</div><div class="t" style="left:758.0px;top:1021.9px;font-size:19px;color:#666;transform:translateX(-50%) scaleX(1.04);transform-origin:center center;">car</div><div class="t" style="left:852.7px;top:995.4px;font-size:19px;color:#666;transform:translateX(-50%) scaleX(1.1);transform-origin:center center;">Converti..</div><div class="t" style="left:947.4px;top:995.4px;font-size:19px;color:#666;transform:translateX(-50%) scaleX(0.975);transform-origin:center center;">Coupe</div><div class="t" style="left:1042.1px;top:995.4px;font-size:19px;color:#666;transform:translateX(-50%) scaleX(1.08);transform-origin:center center;">Hybrid</div><div class="t" style="left:1136.8px;top:995.4px;font-size:19px;color:#666;transform:translateX(-50%) scaleX(0.98);transform-origin:center center;">Large SUV</div><div class="t" style="left:1231.4px;top:995.4px;font-size:19px;color:#666;transform:translateX(-50%) scaleX(1.085);transform-origin:center center;">Medium</div><div class="t" style="left:1231.4px;top:1021.9px;font-size:19px;color:#666;transform:translateX(-50%) scaleX(0.94);transform-origin:center center;">SUV</div><div class="t" style="left:1326.1px;top:995.4px;font-size:19px;color:#666;transform:translateX(-50%) scaleX(1.08);transform-origin:center center;">Mid-size</div><div class="t" style="left:1420.8px;top:995.4px;font-size:19px;color:#666;transform:translateX(-50%) scaleX(1.045);transform-origin:center center;">Sedan</div><div class="t" style="left:1515.5px;top:995.4px;font-size:19px;color:#666;transform:translateX(-50%) scaleX(0.97);transform-origin:center center;">Small SUV</div><div class="t" style="left:1610.2px;top:995.4px;font-size:19px;color:#666;transform:translateX(-50%) scaleX(1.05);transform-origin:center center;">Sports car</div><div class="t" style="left:1704.8px;top:995.4px;font-size:19px;color:#666;transform:translateX(-50%) scaleX(1.13);transform-origin:center center;">Station</div><div class="t" style="left:1704.8px;top:1021.9px;font-size:19px;color:#666;transform:translateX(-50%) scaleX(1.06);transform-origin:center center;">wagon</div>
</body></html>
